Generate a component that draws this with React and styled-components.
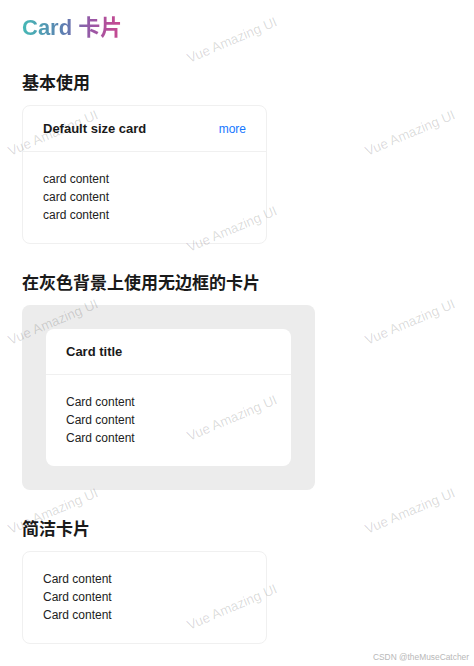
import React from 'react';
import styled, { createGlobalStyle } from 'styled-components';

const GlobalStyle = createGlobalStyle`
  * { box-sizing: border-box; }
  body {
    margin: 0;
    background: #ffffff;
    font-family: "Liberation Sans", "Noto Sans CJK SC", sans-serif;
    color: rgba(0, 0, 0, 0.88);
  }
`

const Page = styled.div`
  position: relative;
  min-height: 666px;
  overflow: hidden;
  padding: 13px 22px 0;
`

const Title = styled.h1`
  display: inline-block;
  margin: 0 0 29px;
  font-size: 22px;
  line-height: 30px;
  font-weight: 700;
  background: linear-gradient(90deg, #45b9b5 0%, #5d7db1 42%, #9a57a6 70%, #cb478e 100%);
  -webkit-background-clip: text;
  background-clip: text;
  color: transparent;
`

const Section = styled.section`
  display: flex;
  flex-direction: column;
  align-items: flex-start;
  & + & {
    margin-top: 28px;
  }
`

const Heading = styled.h2`
  margin: 0 0 9px;
  font-size: 17px;
  line-height: 24px;
  font-weight: 700;
  color: #1a1a1a;
`

const Card = styled.div`
  width: 245px;
  background: #ffffff;
  border-radius: 8px;
  border: ${p => (p.$bordered ? '1px solid #f0f0f0' : 'none')};
`

const CardHead = styled.div`
  display: flex;
  align-items: center;
  justify-content: space-between;
  height: 46px;
  padding: 0 20px;
  border-bottom: 1px solid #f0f0f0;
`

const CardTitle = styled.span`
  font-size: 13px;
  font-weight: 700;
  color: #1a1a1a;
`

const MoreLink = styled.a`
  font-size: 12px;
  color: #1677ff;
  text-decoration: none;
  cursor: pointer;
`

const CardBody = styled.div`
  padding: 18px 20px 19px;
  font-size: 12px;
  line-height: 18px;
  color: #222222;
`

const GreyBox = styled.div`
  padding: 24px;
  background: #ececec;
  border-radius: 8px;
`

const Watermarks = styled.div`
  position: absolute;
  inset: 0;
  pointer-events: none;
  z-index: 5;
`

const Mark = styled.span`
  position: absolute;
  transform: translate(-50%, -50%) rotate(-23deg);
  font-size: 13.5px;
  white-space: nowrap;
  color: rgba(0, 0, 0, 0.15);
`

const Credit = styled.span`
  position: absolute;
  right: 5px;
  bottom: 4px;
  font-size: 8.4px;
  color: #b8b8b8;
  z-index: 6;
`

// staggered watermark grid, only the ones inside the window
const marks = []
for (let col = 0; col < 3; col++) {
  const x = 53 + col * 178.5
  const startY = col % 2 === 1 ? 40 : 133
  for (let y = startY; y < 640; y += 189) {
    marks.push({ x, y })
  }
}

const lines = text => [0, 1, 2].map(i => <div key={i}>{text}</div>)

const App = () => {
  return (
    <Page>
      <GlobalStyle />
      <Title>Card 卡片</Title>

      <Section>
        <Heading>基本使用</Heading>
        <Card $bordered>
          <CardHead>
            <CardTitle>Default size card</CardTitle>
            <MoreLink>more</MoreLink>
          </CardHead>
          <CardBody>{lines('card content')}</CardBody>
        </Card>
      </Section>

      <Section>
        <Heading>在灰色背景上使用无边框的卡片</Heading>
        <GreyBox>
          <Card>
            <CardHead>
              <CardTitle>Card title</CardTitle>
            </CardHead>
            <CardBody>{lines('Card content')}</CardBody>
          </Card>
        </GreyBox>
      </Section>

      <Section>
        <Heading>简洁卡片</Heading>
        <Card $bordered>
          <CardBody>{lines('Card content')}</CardBody>
        </Card>
      </Section>

      <Watermarks>
        {marks.map((m, i) => (
          <Mark key={i} style={{ left: m.x, top: m.y }}>Vue Amazing UI</Mark>
        ))}
      </Watermarks>
      <Credit>CSDN @theMuseCatcher</Credit>
    </Page>
  )
}

export default App;
